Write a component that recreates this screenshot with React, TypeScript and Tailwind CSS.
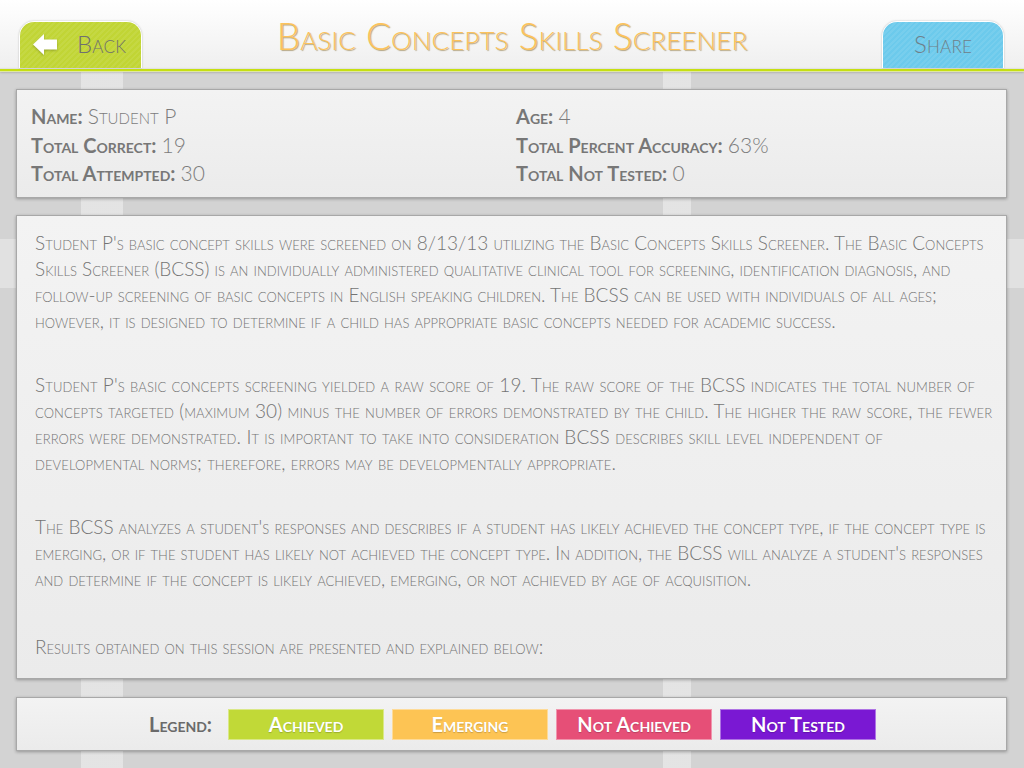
import React from 'react';

const sc = '[font-variant-caps:small-caps]';

function InfoRow({ label, value }: { label: string; value: string }) {
  return (
    <div className="h-[28.5px] leading-[28.5px] whitespace-nowrap">
      <span className="font-bold text-[#777777]">{label}</span>{' '}
      <span className="font-light text-[21px] text-[#7c7c7c]">{value}</span>
    </div>
  );
}

const legend = [
  { label: 'Achieved', cls: 'bg-[#c1d937]' },
  { label: 'Emerging', cls: 'bg-[#fdc454]' },
  { label: 'Not Achieved', cls: 'bg-[#e64f77]' },
  { label: 'Not Tested', cls: 'bg-[#7a18d3]' },
];

export default function App() {
  return (
    <div
      className={`w-[1024px] h-[768px] overflow-hidden bg-[#d3d3d3] bg-[linear-gradient(90deg,transparent_81px,rgba(255,255,255,0.38)_81px,rgba(255,255,255,0.38)_123px,transparent_123px,transparent_663px,rgba(255,255,255,0.38)_663px,rgba(255,255,255,0.38)_691px,transparent_691px),linear-gradient(180deg,transparent_239px,rgba(255,255,255,0.32)_239px,rgba(255,255,255,0.32)_288px,transparent_288px)] font-['Lato','Open_Sans',sans-serif] ${sc}`}
    >
      {/* header */}
      <div className="h-[68px] grid grid-cols-[123px_1fr_122px] px-[19px] pr-[20px] bg-[linear-gradient(180deg,#ffffff,#efefef)]">
        <div className="self-end h-[47px] rounded-t-[15px] border border-b-0 border-white shadow-[0_0_2px_rgba(0,0,0,0.25)] bg-[#c1d535] bg-[repeating-linear-gradient(135deg,rgba(255,255,255,0.07)_0px,rgba(255,255,255,0.07)_2px,transparent_2px,transparent_4px)] flex items-center pl-[13px] gap-[19px]">
          <svg width="25" height="21" viewBox="0 0 25 21" className="drop-shadow-[0_1px_1px_rgba(0,0,0,0.25)] -mt-[2px]">
            <polygon points="0,10.5 11,0 11,5.5 24,5.5 24,15.5 11,15.5 11,21" fill="#ffffff" />
          </svg>
          <span className="text-[24px] leading-none font-light text-[#707070] tracking-[0.2px] -mt-[3px]">Back</span>
        </div>
        <div className="self-center text-center text-[37px] leading-none font-light text-[#fcc35c] tracking-[0.1px] [text-shadow:1px_1px_1px_rgba(120,90,20,0.5)] pt-[3px]">
          Basic Concepts Skills Screener
        </div>
        <div className="self-end h-[47px] rounded-t-[15px] border border-b-0 border-white shadow-[0_0_2px_rgba(0,0,0,0.25)] bg-[#6ccaec] bg-[repeating-linear-gradient(135deg,rgba(255,255,255,0.08)_0px,rgba(255,255,255,0.08)_2px,transparent_2px,transparent_4px)] flex items-center justify-center">
          <span className="text-[24px] leading-none font-light text-[#6f8089] tracking-[0.2px] -mt-[3px]">Share</span>
        </div>
      </div>
      <div className="h-[4px] border-t border-[#e2e2e2] bg-[#c6df12] border-b border-b-[#dfe8a0] shadow-[0_1px_2px_rgba(0,0,0,0.15)]" />

      <div className="pl-[16px] pr-[17px] pt-[17px] flex flex-col">
        {/* info */}
        <div className="h-[109px] border border-[#a8a8a8] bg-[linear-gradient(180deg,#f3f3f3,#ebebeb)] shadow-[0_1px_3px_rgba(0,0,0,0.3)] grid grid-cols-[485px_1fr] pl-[14px] pt-[12px] text-[20px]">
          <div>
            <InfoRow label="Name:" value="Student P" />
            <InfoRow label="Total Correct:" value="19" />
            <InfoRow label="Total Attempted:" value="30" />
          </div>
          <div>
            <InfoRow label="Age:" value="4" />
            <InfoRow label="Total Percent Accuracy:" value="63%" />
            <InfoRow label="Total Not Tested:" value="0" />
          </div>
        </div>

        {/* narrative */}
        <div className="mt-[17px] h-[464px] border border-[#a8a8a8] bg-[linear-gradient(180deg,#f3f3f3,#ebebeb)] shadow-[0_1px_3px_rgba(0,0,0,0.3)] pl-[18px] pr-[9px] pt-[14px] text-[19px] leading-[26px] font-light text-[#747474]">
          <p>
            Student P's basic concept skills were screened on 8/13/13 utilizing the Basic Concepts Skills Screener. The Basic Concepts Skills Screener (BCSS) is an individually administered qualitative clinical tool for screening, identification diagnosis, and follow-up screening of basic concepts in English speaking children. The BCSS can be used with individuals of all ages; however, it is designed to determine if a child has appropriate basic concepts needed for academic success.
          </p>
          <p className="mt-[38px] tracking-[0.1px]">
            Student P's basic concepts screening yielded a raw score of 19. The raw score of the BCSS indicates the total number of concepts targeted (maximum 30) minus the number of errors demonstrated by the child. The higher the raw score, the fewer errors were demonstrated. It is important to take into consideration BCSS describes skill level independent of developmental norms; therefore, errors may be developmentally appropriate.
          </p>
          <p className="mt-[38px]">
            The BCSS analyzes a student's responses and describes if a student has likely achieved the concept type, if the concept type is emerging, or if the student has likely not achieved the concept type. In addition, the BCSS will analyze a student's responses and determine if the concept is likely achieved, emerging, or not achieved by age of acquisition.
          </p>
          <p className="mt-[42px]">Results obtained on this session are presented and explained below:</p>
        </div>

        {/* legend */}
        <div className="mt-[18px] h-[54px] border border-[#a8a8a8] bg-[linear-gradient(180deg,#f3f3f3,#ebebeb)] shadow-[0_1px_3px_rgba(0,0,0,0.3)] flex items-center pl-[132px] gap-[8px]">
          <span className="font-bold text-[20px] text-[#6a6a6a] mr-[8px]">Legend:</span>
          {legend.map((l) => (
            <div
              key={l.label}
              className={`w-[156px] h-[31px] ${l.cls} border border-white/40 flex items-center justify-center text-white font-bold text-[20px] [text-shadow:0_1px_1px_rgba(0,0,0,0.2)]`}
            >
              {l.label}
            </div>
          ))}
        </div>
      </div>
    </div>
  );
}
